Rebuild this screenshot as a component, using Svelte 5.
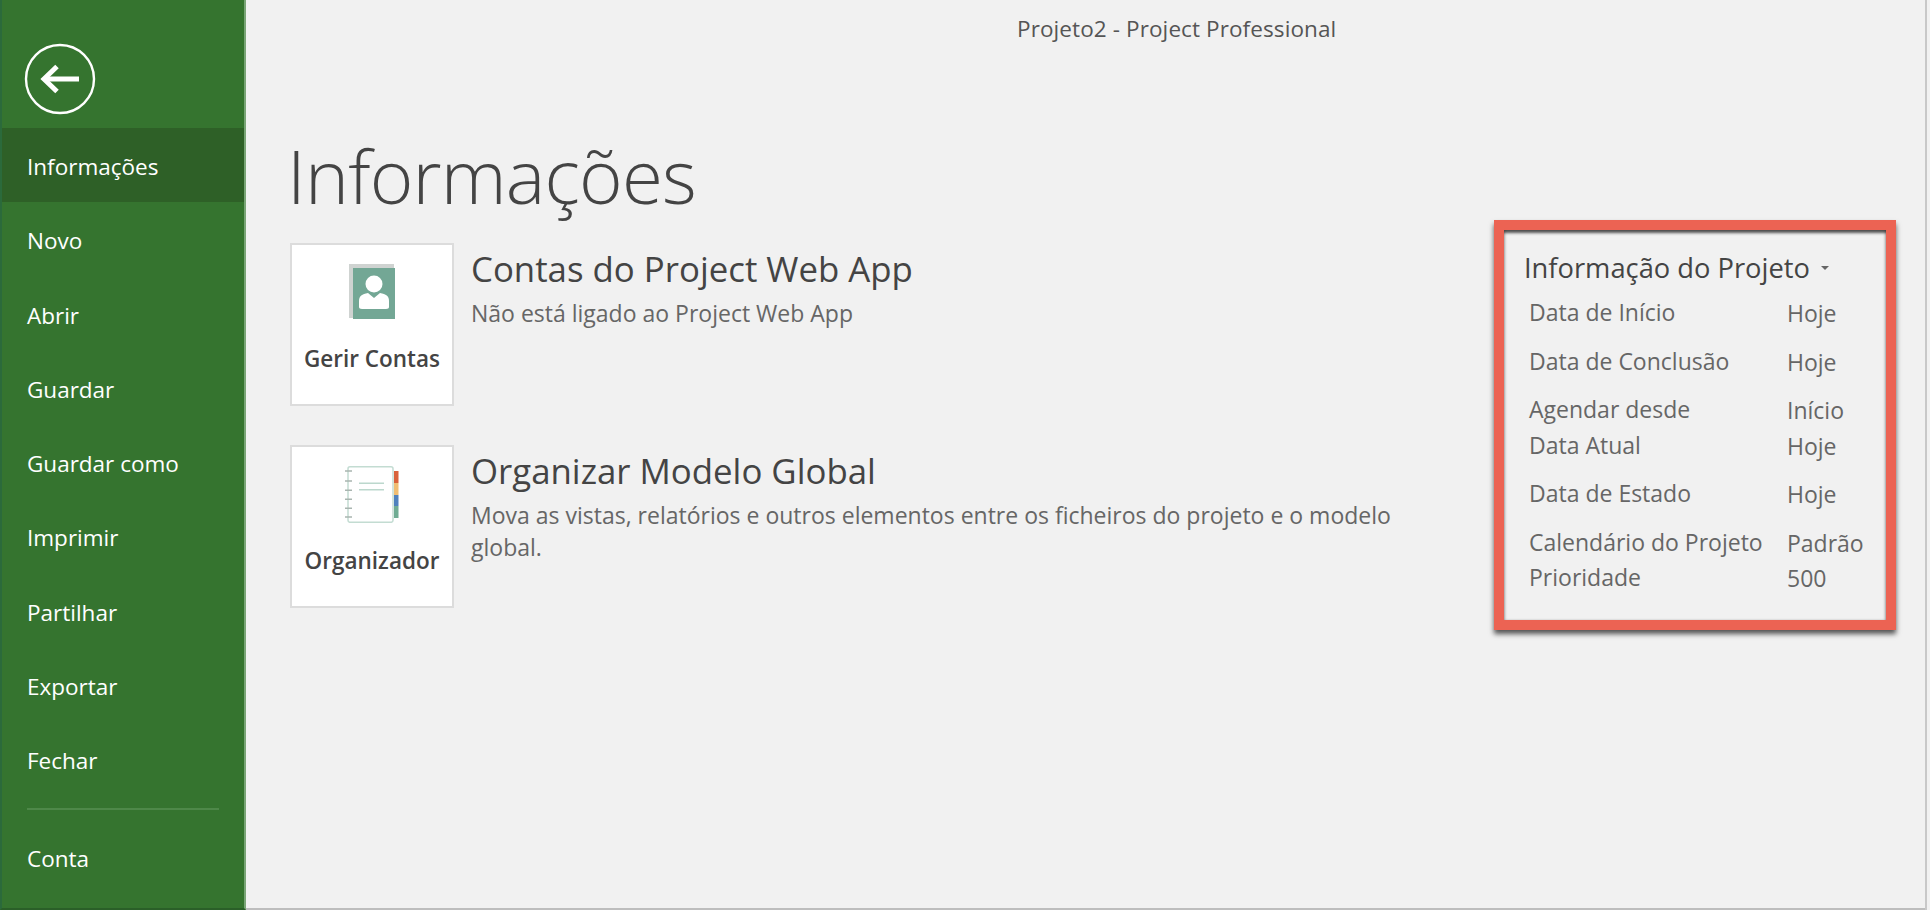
<script>
  const menu = ['Informações','Novo','Abrir','Guardar','Guardar como','Imprimir','Partilhar','Exportar','Fechar'];
  const info = [
    ['Data de Início','Hoje','gap'],
    ['Data de Conclusão','Hoje','gap'],
    ['Agendar desde','Início','tight'],
    ['Data Atual','Hoje','gap'],
    ['Data de Estado','Hoje','gap'],
    ['Calendário do Projeto','Padrão','tight'],
    ['Prioridade','500','tight']
  ];
</script>

<div class="window">
  <nav class="side">
    <div class="back">
      <svg width="72" height="72" viewBox="0 0 72 72" fill="none">
        <circle cx="36" cy="36" r="34" stroke="#fff" stroke-width="2.4"/>
        <path d="M22 36H55" stroke="#fff" stroke-width="5"/>
        <path d="M33 23.5L20 36L33 48.500" stroke="#fff" stroke-width="5"/>
      </svg>
    </div>
    <ul class="menu">
      {#each menu as m, i}
        <li class:active={i === 0}>{m}</li>
      {/each}
    </ul>
    <div class="sep"></div>
    <div class="conta">Conta</div>
  </nav>

  <main class="content">
    <div class="wintitle">Projeto2 - Project Professional</div>
    <h1>Informações</h1>
    <section class="row first">
      <div class="card">
        <svg width="46" height="57" viewBox="0 0 46 57">
          <rect x="0" y="0" width="45" height="54" fill="#cfd3d1"/>
          <rect x="4" y="4" width="42" height="51" fill="#73a795"/>
          <circle cx="25" cy="20" r="8.500" fill="#fff"/>
          <path d="M10 37c0-5 3-7 9-8l6 5 6-5c6 1 9 3 9 8v6c0 1-1 2-3 2H13c-2 0-3-1-3-2z" fill="#fff"/>
        </svg>
        <span>Gerir Contas</span>
      </div>
      <div class="desc">
        <h2>Contas do Project Web App</h2>
        <p>Não está ligado ao Project Web App</p>
      </div>
    </section>
    <section class="row">
      <div class="card">
        <svg width="54" height="57" viewBox="0 0 54 57" fill="none">
          <rect x="3" y="0.800" width="45" height="55.500" rx="2" fill="#fff" stroke="#c3dcd2" stroke-width="1.500"/>
          <path d="M0 5h7M0 15h7M0 24.300h7M0 33.300h7M0 42.300h7M0 51h7" stroke="#a9b5b0" stroke-width="1.500"/>
          <path d="M14 17.300H39M14 23.700H39" stroke="#bcd8cd" stroke-width="1.500"/>
          <rect x="49" y="5" width="4.500" height="12" fill="#d9623b"/>
          <rect x="49" y="17" width="4.500" height="12" fill="#f0bd72"/>
          <rect x="49" y="29" width="4.500" height="11" fill="#4f81bd"/>
          <rect x="49" y="40" width="4.500" height="12" fill="#6fac93"/>
        </svg>
        <span>Organizador</span>
      </div>
      <div class="desc">
        <h2>Organizar Modelo Global</h2>
        <p>Mova as vistas, relatórios e outros elementos entre os ficheiros do projeto e o modelo<br />global.</p>
      </div>
    </section>
  </main>

  <aside class="info">
    <h3>Informação do Projeto <i class="caret"></i></h3>
    <dl>
      {#each info as r}
        <div class="irow {r[2]}"><dt>{r[0]}</dt><dd>{r[1]}</dd></div>
      {/each}
    </dl>
  </aside>
</div>

<style>
  :global(body) { margin: 0; background: #f1f1f1; }
  .window {
    position: relative;
    width: 1930px;
    height: 910px;
    overflow: hidden;
    display: flex;
    background: #f1f1f1;
    font-family: "Open Sans", "Noto Sans", sans-serif;
    border-right: 3px solid #f1f1f1;
    box-sizing: border-box;
  }
  .window::after {
    content: "";
    position: absolute;
    top: 0;
    bottom: 0;
    right: 0;
    width: 2px;
    background: #c8c8c8;
  }
  .side {
    width: 246px;
    flex: none;
    background: #35742f;
    border-left: 2px solid #2b6a3b;
    border-right: 2px solid #79a576;
    border-bottom: 2px solid #2a5f28;
    box-sizing: border-box;
    color: #fff;
    font-size: 22.500px;
    display: flex;
    flex-direction: column;
  }
  .back { padding: 43px 0 0 22px; height: 85px; }
  .back svg { display: block; }
  .menu { list-style: none; margin: 0; padding: 0; }
  .menu li {
    height: 74.300px;
    line-height: 77px;
    padding-left: 25px;
  }
  .menu li.active { background: #2e6027; }
  .sep { height: 2px; background: #4e8849; margin: 11px 25px 0 25px; }
  .conta { padding: 35px 0 0 25px; line-height: 28px; }
  .content { flex: 1; padding-left: 45px; position: relative; color: #444; border-bottom: 2px solid #bdbdbd; }
  .wintitle {
    position: absolute;
    top: 15px;
    left: 771px;
    font-size: 22.500px;
    line-height: 28px;
    letter-spacing: 0.1px;
    color: #555;
  }
  h1 {
    margin: 0 0 0 -4px;
    padding-top: 122px;
    height: 121px;
    font-size: 74.500px;
    font-weight: 300;
    line-height: 106px;
    color: #444;
    letter-spacing: -0.8px;
  }
  .row { display: flex; gap: 17px; align-items: flex-start; height: 202px; }
  .card {
    width: 164px;
    height: 163px;
    background: #fff;
    border: 2px solid #dcdcdc;
    box-sizing: border-box;
    display: flex;
    flex-direction: column;
    align-items: center;
    padding-top: 19px;
    margin-left: -1px;
    flex: none;
  }
  .card svg { display: block; }
  .card span {
    font-size: 22.500px;
    font-weight: 600;
    color: #444;
    margin-top: 24px;
    line-height: 28px;
    white-space: nowrap;
  }
  .desc h2 {
    margin: 6px 0 0;
    font-size: 34.800px;
    font-weight: 400;
    line-height: 40px;
    color: #444;
  }
  .desc p {
    margin: 8px 0 0;
    font-size: 23px;
    line-height: 32px;
    color: #666;
    white-space: nowrap;
  }
  .info {
    position: absolute;
    left: 1494px;
    top: 220px;
    width: 402px;
    height: 410px;
    box-sizing: border-box;
    border: 10px solid #ec6353;
    box-shadow: 0 4px 5px rgba(0,0,0,.65), inset 0 4px 3px -1px rgba(0,0,0,.65), inset 2px 0 3px -1px rgba(0,0,0,.25), inset -2px 0 3px -1px rgba(0,0,0,.25);
    padding: 20px 0 0 20px;
  }
  h3 {
    margin: 0;
    font-size: 27.300px;
    font-weight: 400;
    line-height: 36px;
    color: #444;
    white-space: nowrap;
  }
  .caret {
    display: inline-block;
    width: 0;
    height: 0;
    border-left: 4px solid transparent;
    border-right: 4px solid transparent;
    border-top: 4px solid #666;
    vertical-align: 8px;
    margin-left: 4px;
  }
  dl { margin: 11px 0 0 5px; }
  .irow { display: flex; line-height: 30px; font-size: 23px; color: #666; }
  .irow.gap { height: 48.500px; }
  .irow.tight { height: 35.500px; }
  dt { width: 258px; flex: none; white-space: nowrap; }
  dd { margin: 0; padding-top: 1px; white-space: nowrap; }
</style>
